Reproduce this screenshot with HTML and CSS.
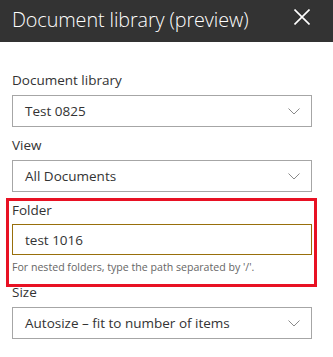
FILE: index.html
```html
<!DOCTYPE html>
<html>
<head>
<meta charset="utf-8">
<link rel="stylesheet" href="styles.css">
</head>
<body>
<div class="pane">
  <div class="header">
    <div class="title">Document library (preview)</div>
    <button class="close" aria-label="Close">
      <svg width="16" height="16" viewBox="0 0 16 16"><path d="M0.5 0.5 L15.5 15.5 M15.5 0.5 L0.5 15.5" stroke="#fff" stroke-width="1.6" fill="none"/></svg>
    </button>
  </div>
  <div class="content">
    <div class="field first">
      <div class="label">Document library</div>
      <div class="dropdown"><span>Test 0825</span>
        <svg class="chev" width="12" height="7" viewBox="0 0 12 7"><path d="M0.5 0.5 L6 6 L11.5 0.5" stroke="#8a8a8a" stroke-width="1" fill="none"/></svg>
      </div>
    </div>
    <div class="field">
      <div class="label">View</div>
      <div class="dropdown"><span>All Documents</span>
        <svg class="chev" width="12" height="7" viewBox="0 0 12 7"><path d="M0.5 0.5 L6 6 L11.5 0.5" stroke="#8a8a8a" stroke-width="1" fill="none"/></svg>
      </div>
    </div>
    <div class="field">
      <div class="label">Folder</div>
      <div class="textbox">test 1016</div>
      <div class="desc">For nested folders, type the path separated by '/'.</div>
    </div>
    <div class="field size">
      <div class="label">Size</div>
      <div class="dropdown"><span>Autosize – fit to number of items</span>
        <svg class="chev" width="12" height="7" viewBox="0 0 12 7"><path d="M0.5 0.5 L6 6 L11.5 0.5" stroke="#8a8a8a" stroke-width="1" fill="none"/></svg>
      </div>
    </div>
  </div>
  <div class="highlight"></div>
</div>
</body>
</html>
```
FILE: styles.css
```css
* { box-sizing: border-box; }
html, body { margin: 0; padding: 0; background: #fff; }
body { font-family: "Open Sans", "Noto Sans", sans-serif; color: #333; }
.pane { position: relative; width: 333px; height: 357px; overflow: hidden; }
.header {
  height: 42px;
  background: #333333;
  display: flex;
  align-items: flex-start;
  justify-content: space-between;
  padding: 7px 23px 0 12px;
}
.title { color: #fff; font-size: 19.8px; font-weight: 300; line-height: 26px; letter-spacing: -0.1px; }
.close { background: none; border: 0; padding: 0; margin-top: 2px; width: 16px; height: 16px; display: block; }
.close svg { display: block; }
.content { padding: 23px 21px 0 12px; display: flex; flex-direction: column; gap: 3px; }
.field.size { margin-top: -1px; }
.label { font-size: 13.5px; line-height: 20px; padding: 5px 0; height: 30px; color: #333; }
.dropdown, .textbox {
  height: 32px;
  border: 1px solid #a6a6a6;
  display: flex;
  align-items: center;
  justify-content: space-between;
  padding: 0 11px 0 12px;
  font-size: 13.5px;
  color: #333;
}
.textbox { height: 31px; margin-top: -1px; border-color: #986f0b; }
.chev { display: block; }
.desc { font-size: 10.6px; color: #666; line-height: 16px; padding-top: 4px; height: 20px; }
.highlight {
  position: absolute;
  left: 6px;
  top: 198px;
  width: 311px;
  height: 89px;
  border: 3px solid #e81123;
}
```
